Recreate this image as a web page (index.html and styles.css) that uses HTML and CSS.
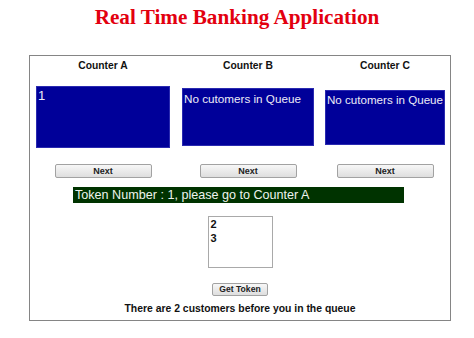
FILE: index.html
```html
<!DOCTYPE html>
<html lang="en">
<head>
    <meta charset="UTF-8">
    <meta name="viewport" content="width=device-width, initial-scale=1.0">
    <title>Real Time Banking Application</title>
    <link rel="stylesheet" href="styles.css">
</head>
<body>
    <h1 class="page-title">Real Time Banking Application</h1>
    <div class="bank-panel">
        <div class="counters">
            <div class="counter counter-a">
                <div class="counter-head">Counter A</div>
                <div class="counter-slot">
                    <div class="counter-box">1</div>
                </div>
                <button class="next-btn">Next</button>
            </div>
            <div class="counter counter-b">
                <div class="counter-head">Counter B</div>
                <div class="counter-slot">
                    <div class="counter-box">No cutomers in Queue</div>
                </div>
                <button class="next-btn">Next</button>
            </div>
            <div class="counter counter-c">
                <div class="counter-head">Counter C</div>
                <div class="counter-slot">
                    <div class="counter-box">No cutomers in Queue</div>
                </div>
                <button class="next-btn">Next</button>
            </div>
        </div>
        <div class="token-msg">Token Number : 1, please go to Counter A</div>
        <div class="queue-list">
            <div>2</div>
            <div>3</div>
        </div>
        <button class="token-btn">Get Token</button>
        <div class="queue-status">There are 2 customers before you in the queue</div>
    </div>
</body>
</html>
```

FILE: styles.css
```css
body, html {
    margin: 0;
    padding: 0;
    background: #fff;
    font-family: "Liberation Sans", Arial, sans-serif;
}
.page-title {
    margin: 5px 0 0 0;
    height: 50px;
    line-height: 24px;
    text-align: center;
    font-family: "Liberation Serif", "Times New Roman", serif;
    font-size: 21.2px;
    font-weight: bold;
    color: #e3000f;
}
.bank-panel {
    margin-left: 29px;
    width: 420px;
    border: 1px solid #858585;
    padding: 3px 0 5px 0;
    display: flex;
    flex-direction: column;
    align-items: center;
}
.counters {
    display: grid;
    grid-template-columns: 146px 144px 130px;
    width: 100%;
}
.counter {
    display: flex;
    flex-direction: column;
    align-items: center;
}
.counter-head {
    height: 14px;
    line-height: 14px;
    font-size: 10.3px;
    font-weight: bold;
    color: #111;
}
.counter-slot {
    height: 62px;
    margin-top: 13px;
    display: flex;
    align-items: center;
}
.counter-box {
    box-sizing: border-box;
    background: #000099;
    border: 1px solid #2a2ab0;
    color: #ecebf6;
    padding: 1px 1px;
    line-height: 15px;
    white-space: nowrap;
}
.counter-a .counter-box {
    width: 134px;
    height: 62px;
    font-size: 13px;
}
.counter-b .counter-box {
    width: 132px;
    height: 58px;
    font-size: 11.7px;
    padding-top: 2px;
}
.counter-c .counter-box {
    width: 120px;
    height: 55px;
    font-size: 11.6px;
    padding: 1px 0 0 1px;
}
.next-btn, .token-btn {
    box-sizing: border-box;
    margin: 0;
    padding: 0;
    border: 1px solid #a2a2a2;
    border-radius: 2px;
    background: linear-gradient(to bottom, #f7f7f7, #dedede);
    font-family: "Liberation Sans", Arial, sans-serif;
    font-weight: bold;
    color: #222;
}
.next-btn {
    margin-top: 16px;
    width: 97px;
    height: 14px;
    font-size: 9px;
    line-height: 12px;
}
.token-msg {
    align-self: flex-start;
    margin: 9px 0 0 43px;
    width: 331px;
    height: 16px;
    line-height: 16px;
    padding-left: 2px;
    box-sizing: border-box;
    background: #003300;
    color: #eef3ee;
    font-size: 12.6px;
    white-space: nowrap;
}
.queue-list {
    box-sizing: border-box;
    margin-top: 13px;
    width: 65px;
    height: 52px;
    border: 1px solid #a9a9a9;
    padding: 1px 2px;
    font-size: 11px;
    font-weight: bold;
    line-height: 13.5px;
    color: #111;
}
.token-btn {
    margin-top: 15px;
    width: 56px;
    height: 13px;
    font-size: 8.6px;
    line-height: 11px;
}
.queue-status {
    margin-top: 7px;
    height: 12px;
    line-height: 12px;
    font-size: 10.4px;
    font-weight: bold;
    color: #111;
}
```
